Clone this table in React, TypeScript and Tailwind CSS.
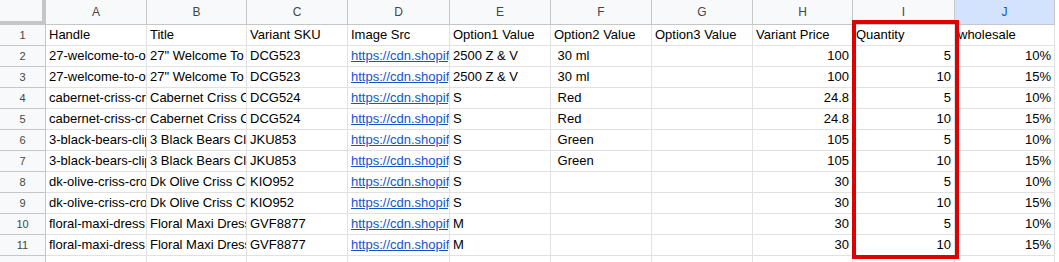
import React from 'react';

const cols = [
    { key: 'A', w: 101 },
    { key: 'B', w: 100 },
    { key: 'C', w: 101 },
    { key: 'D', w: 102 },
    { key: 'E', w: 101 },
    { key: 'F', w: 101 },
    { key: 'G', w: 101 },
    { key: 'H', w: 100 },
    { key: 'I', w: 102 },
    { key: 'J', w: 100 },
];

type Cell = { v: string; right?: boolean; link?: boolean };

const header = ['Handle', 'Title', 'Variant SKU', 'Image Src', 'Option1 Value', 'Option2 Value', 'Option3 Value', 'Variant Price', 'Quantity', 'wholesale'];

const raw: [string, string, string, string, string, string, string, string][] = [
    ['27-welcome-to-our-home', '27" Welcome To Our Home', 'DCG523', '2500 Z & V', ' 30 ml', '100', '5', '10%'],
    ['27-welcome-to-our-home', '27" Welcome To Our Home', 'DCG523', '2500 Z & V', ' 30 ml', '100', '10', '15%'],
    ['cabernet-criss-cross', 'Cabernet Criss Cross', 'DCG524', 'S', ' Red', '24.8', '5', '10%'],
    ['cabernet-criss-cross', 'Cabernet Criss Cross', 'DCG524', 'S', ' Red', '24.8', '10', '15%'],
    ['3-black-bears-clip', '3 Black Bears Clip', 'JKU853', 'S', ' Green', '105', '5', '10%'],
    ['3-black-bears-clip', '3 Black Bears Clip', 'JKU853', 'S', ' Green', '105', '10', '15%'],
    ['dk-olive-criss-cross', 'Dk Olive Criss Cross', 'KIO952', 'S', '', '30', '5', '10%'],
    ['dk-olive-criss-cross', 'Dk Olive Criss Cross', 'KIO952', 'S', '', '30', '10', '15%'],
    ['floral-maxi-dress', 'Floral Maxi Dress', 'GVF8877', 'M', '', '30', '5', '10%'],
    ['floral-maxi-dress', 'Floral Maxi Dress', 'GVF8877', 'M', '', '30', '10', '15%'],
];

const rows: Cell[][] = [
    header.map(v => ({ v })),
    ...raw.map(r => [
        { v: r[0] },
        { v: r[1] },
        { v: r[2] },
        { v: 'https://cdn.shopify.com/s/files', link: true },
        { v: r[3] },
        { v: r[4] },
        { v: '' },
        { v: r[5], right: true },
        { v: r[6], right: true },
        { v: r[7], right: true },
    ]),
    Array.from({ length: 10 }).map(() => ({ v: '' })),
];

export default function App() {
    return (
        <div className="relative w-[1059px] h-[262px] overflow-hidden bg-white" style={{ fontFamily: '"Liberation Sans", Arial, sans-serif' }}>
            {/* Column letters */}
            <div className="flex h-[25px]">
                <div className="w-[46px] shrink-0 bg-[#f8f9fa] border-r-[4px] border-b-[4px] border-[#c4c7c5] h-[25px]" />
                {cols.map(c => (
                    <div key={c.key}
                        className={`shrink-0 flex items-center justify-center text-[12px] border-r border-b border-[#c4c7c5] ${c.key === 'J' ? 'bg-[#d3e3fd] text-[#0b57d0]' : 'bg-[#f8f9fa] text-[#444746]'}`}
                        style={{ width: c.w }}>
                        {c.key}
                    </div>
                ))}
            </div>

            {/* Rows */}
            {rows.map((r, ri) => (
                <div key={ri} className="flex h-[21px]">
                    <div className="w-[46px] shrink-0 flex items-center justify-center bg-[#f8f9fa] border-r border-b border-[#c4c7c5] text-[11px] text-[#444746]">
                        {ri + 1}
                    </div>
                    {r.map((cell, ci) => (
                        <div key={ci}
                            className={`shrink-0 overflow-hidden whitespace-pre flex items-center px-[3px] border-r border-b border-[#e1e1e1] text-[13px] ${cell.right ? 'justify-end' : ''} ${cell.link ? 'text-[#1155cc] underline' : 'text-black'}`}
                            style={{ width: cols[ci].w }}>
                            {cell.v}
                        </div>
                    ))}
                </div>
            ))}

            {/* Highlight around Quantity column */}
            <div className="absolute left-[852px] top-[20px] w-[107px] h-[239px] border-[4px] border-[#e00000] pointer-events-none" />
        </div>
    );
}
